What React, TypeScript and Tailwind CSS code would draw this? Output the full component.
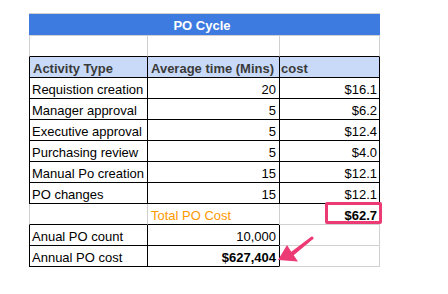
import type { ReactNode } from "react";

type CellProps = {
  w: string;
  className?: string;
  children?: ReactNode;
};

function Cell({ w, className = "", children }: CellProps) {
  return (
    <div className={`flex h-full items-end border-l border-b pb-[1px] leading-[15px] ${w} ${className}`}>
      {children}
    </div>
  );
}

const C1 = "w-[118px]";
const C2 = "w-[132px]";
const C3 = "w-[101px] border-r";

const rows: { label: string; mins: string; cost: string }[] = [
  { label: "Requistion creation", mins: "20", cost: "$16.1" },
  { label: "Manager approval", mins: "5", cost: "$6.2" },
  { label: "Executive approval", mins: "5", cost: "$12.4" },
  { label: "Purchasing review", mins: "5", cost: "$4.0" },
  { label: "Manual Po creation", mins: "15", cost: "$12.1" },
  { label: "PO changes", mins: "15", cost: "$12.1" },
];

export default function App() {
  return (
    <div
      className="relative h-[294px] w-[448px] overflow-hidden bg-white text-[13px] text-black"
      style={{ fontFamily: '"Liberation Sans", Arial, sans-serif' }}
    >
      <div className="ml-[29px] mt-[13px] w-[351px] border-t border-[#d0d0d0]">
        {/* title */}
        <div className="flex h-[22px] items-end justify-center border-b border-[#d0d0d0] bg-[#3d7be0] pb-[2px] pr-[5px] font-bold leading-[15px] text-white">
          PO Cycle
        </div>

        {/* blank row */}
        <div className="flex h-[21px]">
          <Cell w={C1} className="border-l-[#d0d0d0] border-b-black" />
          <Cell w={C2} className="border-l-[#d0d0d0] border-b-black" />
          <Cell w={C3} className="border-l-[#d0d0d0] border-r-[#d0d0d0] border-b-black" />
        </div>

        {/* header */}
        <div className="flex h-[21px] bg-[#c9daf8] font-bold text-[#3a3a3a]">
          <Cell w={C1} className="border-black pl-[3px]">Activity Type</Cell>
          <Cell w={C2} className="border-black pl-[3px]">Average time (Mins)</Cell>
          <Cell w={C3} className="border-black pl-[1px]">cost</Cell>
        </div>

        {rows.map((r) => (
          <div key={r.label} className="flex h-[21px]">
            <Cell w={C1} className="border-black pl-[2px]">{r.label}</Cell>
            <Cell w={C2} className="justify-end border-black pr-[3px]">{r.mins}</Cell>
            <Cell w={C3} className="justify-end border-black pr-[2px]">{r.cost}</Cell>
          </div>
        ))}

        {/* total */}
        <div className="flex h-[21px]">
          <Cell w={C1} className="border-l-[#d0d0d0] border-b-black" />
          <Cell w={C2} className="border-l-[#d0d0d0] border-b-black pl-[3px] text-[#ff9900]">Total PO Cost</Cell>
          <Cell w={C3} className="justify-end border-l-[#d0d0d0] border-r-[#d0d0d0] border-b-[#d0d0d0] pr-[2px] font-bold">
            $62.7
          </Cell>
        </div>

        <div className="flex h-[21px]">
          <Cell w={C1} className="border-black pl-[2px]">Anual PO count</Cell>
          <Cell w={C2} className="justify-end border-black pr-[3px]">10,000</Cell>
          <Cell w={C3} className="border-l-black border-r-[#d0d0d0] border-b-[#d0d0d0]" />
        </div>
        <div className="flex h-[21px]">
          <Cell w={C1} className="border-black pl-[2px]">Annual PO cost</Cell>
          <Cell w={C2} className="justify-end border-black pr-[3px] font-bold">$627,404</Cell>
          <Cell w={C3} className="border-l-black border-r-[#d0d0d0] border-b-[#d0d0d0]" />
        </div>
      </div>

      {/* highlight box */}
      <div className="absolute left-[325px] top-[202px] h-[22px] w-[57px] rounded-[2px] border-[3px] border-[#ec3a74]" />

      {/* arrow */}
      <svg className="pointer-events-none absolute left-0 top-0" width="448" height="294" viewBox="0 0 448 294">
        <polygon
          points="311.2,236.7 291.3,251.7 287,245 278,260 298,261.5 293.7,255.3 312.8,239.3"
          fill="#ec3a74"
        />
        <circle cx="312" cy="238" r="1.6" fill="#ec3a74" />
      </svg>
    </div>
  );
}
